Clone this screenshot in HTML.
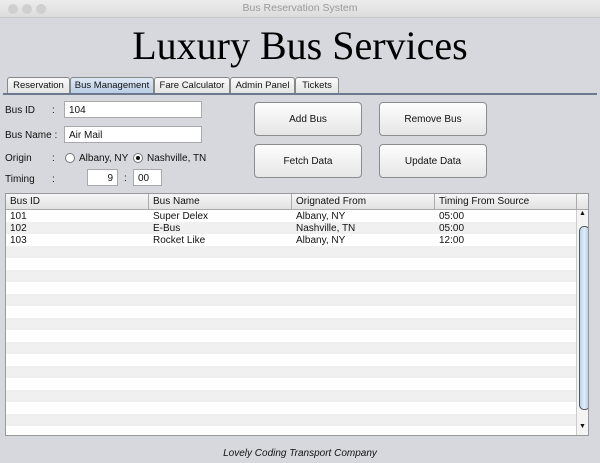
<!DOCTYPE html><html><head><style>
body{margin:0;width:600px;height:463px;background:#d6d8de;font-family:"Liberation Sans",sans-serif;font-size:10px;color:#111;position:relative;overflow:hidden}
.a{position:absolute}
.tb{left:0;top:0;width:600px;height:17px;background:linear-gradient(#ececec,#dcdcdc);border-bottom:1px solid #c8c8c8;text-align:center;color:#9a9a9a;font-size:10.5px;line-height:17px}
.dot{width:10px;height:10px;border-radius:50%;background:#cfcfcf;top:4px}
.tab{top:77px;height:15px;border:1px solid #888;border-bottom:none;border-radius:3px 3px 0 0;background:linear-gradient(#fafafa,#e4e4e4);font-size:9.5px;line-height:16px;text-align:center}
.in{background:#fff;border:1px solid #aaa;height:17px;line-height:17px;padding-left:4px;box-sizing:border-box;font-size:10px}
.btn{width:108px;height:34px;border:1px solid #8c8c8c;border-radius:4px;background:linear-gradient(#fdfdfd,#e6e6e6);text-align:center;line-height:34px;font-size:10px;box-sizing:border-box}
.rad{width:10px;height:10px;border:1px solid #777;border-radius:50%;background:#fff;box-sizing:border-box}
</style></head><body>
<div class="a tb">Bus Reservation System</div>
<div class="a dot" style="left:8px"></div><div class="a dot" style="left:22px"></div><div class="a dot" style="left:36px"></div>
<div class="a" style="left:0;width:600px;top:22px;text-align:center;font-family:'Liberation Serif',serif;font-size:40px;line-height:48px;color:#000">Luxury Bus Services</div>
<div class="a tab" style="left:7px;width:61px">Reservation</div>
<div class="a tab" style="left:70px;width:82px;background:linear-gradient(#dfe9f5,#b9cde4)">Bus Management</div>
<div class="a tab" style="left:154px;width:74px">Fare Calculator</div>
<div class="a tab" style="left:230px;width:63px">Admin Panel</div>
<div class="a tab" style="left:295px;width:42px">Tickets</div>
<div class="a" style="left:3px;top:93px;width:594px;height:2px;background:#6b7a8f"></div>
<div class="a" style="left:5px;top:105px">Bus ID</div><div class="a" style="left:52px;top:105px">:</div>
<div class="a in" style="left:64px;top:101px;width:138px">104</div>
<div class="a" style="left:5px;top:130px">Bus Name :</div>
<div class="a in" style="left:64px;top:126px;width:138px">Air Mail</div>
<div class="a" style="left:5px;top:153px">Origin</div><div class="a" style="left:52px;top:153px">:</div>
<div class="a rad" style="left:65px;top:153px"></div><div class="a" style="left:79px;top:153px">Albany, NY</div>
<div class="a rad" style="left:133px;top:153px"></div><div class="a" style="left:136px;top:156px;width:4px;height:4px;border-radius:50%;background:#111"></div><div class="a" style="left:147px;top:153px">Nashville, TN</div>
<div class="a" style="left:5px;top:174px">Timing</div><div class="a" style="left:52px;top:174px">:</div>
<div class="a in" style="left:87px;top:169px;width:31px;text-align:right;padding-right:4px">9</div>
<div class="a" style="left:124px;top:173px">:</div>
<div class="a in" style="left:133px;top:169px;width:29px">00</div>
<div class="a btn" style="left:254px;top:102px">Add Bus</div>
<div class="a btn" style="left:379px;top:102px">Remove Bus</div>
<div class="a btn" style="left:254px;top:144px">Fetch Data</div>
<div class="a btn" style="left:379px;top:144px">Update Data</div>
<div class="a" style="left:5px;top:193px;width:584px;height:243px;border:1px solid #999;box-sizing:border-box;background:repeating-linear-gradient(#fff 0 12px,#f0f0f0 12px 24px);background-position:0 16px;overflow:hidden">
<div style="position:absolute;left:0;top:0;width:584px;height:15px;background:linear-gradient(#f6f6f6,#e2e2e2);border-bottom:1px solid #aaa"></div>
<div style="position:absolute;left:0;top:0;width:575px;height:15px;line-height:15px">
<span class="a" style="left:4px">Bus ID</span><span class="a" style="left:147px">Bus Name</span><span class="a" style="left:290px">Orignated From</span><span class="a" style="left:433px">Timing From Source</span>
<span class="a" style="left:142px;top:0;width:1px;height:15px;background:#aaa"></span><span class="a" style="left:285px;width:1px;height:15px;background:#aaa"></span><span class="a" style="left:428px;width:1px;height:15px;background:#aaa"></span><span class="a" style="left:570px;width:1px;height:15px;background:#aaa"></span></div>
<div class="a" style="left:4px;top:17px;line-height:12px">101<br>102<br>103</div>
<div class="a" style="left:147px;top:17px;line-height:12px">Super Delex<br>E-Bus<br>Rocket Like</div>
<div class="a" style="left:290px;top:17px;line-height:12px">Albany, NY<br>Nashville, TN<br>Albany, NY</div>
<div class="a" style="left:433px;top:17px;line-height:12px">05:00<br>05:00<br>12:00</div>
<div class="a" style="left:570px;top:16px;width:13px;height:225px;background:#f4f4f4;border-left:1px solid #ccc"></div>
<div class="a" style="left:573px;top:16px;font-size:7px">▲</div>
<div class="a" style="left:573px;top:32px;width:9px;height:182px;border-radius:5px;border:1px solid #555;background:linear-gradient(90deg,#b9d4ee,#e2eefa,#a8c6e6)"></div>
<div class="a" style="left:573px;top:229px;font-size:7px">▼</div>
</div>
<div class="a" style="left:0;width:600px;top:448px;text-align:center;font-style:italic;font-size:10px">Lovely Coding Transport Company</div>
</body></html>
